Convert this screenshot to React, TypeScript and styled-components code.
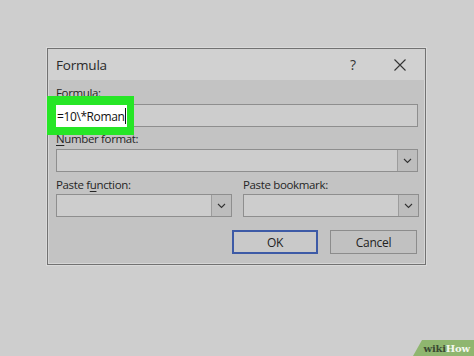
import React from 'react';
import styled, { createGlobalStyle } from 'styled-components';

const GlobalStyle = createGlobalStyle`
  html, body {
    margin: 0;
    padding: 0;
    background: #cdcdcd;
  }
  #root {
    width: 474px;
    height: 356px;
  }
`;

const Page = styled.div`
  position: relative;
  width: 474px;
  height: 356px;
  box-sizing: border-box;
  padding: 48px 0 0 47px;
  background: #cecece;
  overflow: hidden;
  font-family: 'Open Sans', 'Noto Sans', sans-serif;
  color: #222;
`;

const Dialog = styled.div`
  width: 379px;
  height: 217px;
  box-sizing: border-box;
  border: 1px solid #727272;
  box-shadow: 0 0 0 1px #dadada, inset 0 0 0 1px #d6d6d6;
  display: flex;
  flex-direction: column;
  background: #c3c3c3;
`;

const TitleBar = styled.div`
  height: 31px;
  flex: none;
  display: flex;
  align-items: center;
  padding: 0 10px 0 8px;
  background: #d1d1d1;
`;

const Title = styled.div`
  flex: 1;
  font-size: 13.5px;
  color: #2a2a2a;
  letter-spacing: -0.2px;
`;

const TitleButton = styled.div<{ $width: number; $gap?: number }>`
  width: ${p => p.$width}px;
  margin-left: ${p => p.$gap ?? 0}px;
  display: flex;
  justify-content: center;
  align-items: center;
  font-size: 14px;
  color: #333;
`;

const Body = styled.div`
  flex: 1;
  display: flex;
  flex-direction: column;
  padding: 5px 7px 0 8px;
`;

const Label = styled.div<{ $top?: number }>`
  font-size: 11.5px;
  letter-spacing: -0.35px;
  line-height: 16px;
  height: 16px;
  margin-top: ${p => p.$top ?? 0}px;
  color: #262626;
  white-space: nowrap;
`;

const Mnemonic = styled.span`
  text-decoration: underline;
  text-underline-offset: 2px;
`;

const Field = styled.div<{ $height: number; $top?: number }>`
  position: relative;
  height: ${p => p.$height}px;
  margin-top: ${p => p.$top ?? 0}px;
  box-sizing: border-box;
  border: 1px solid #8e8e8e;
  background: #cdcdcd;
  display: flex;
  align-items: stretch;
`;

const FieldText = styled.div`
  flex: 1;
`;

const ArrowButton = styled.div`
  width: 19px;
  flex: none;
  display: flex;
  align-items: center;
  justify-content: center;
  background: #bdbdbd;
  border-left: 1px solid #9c9c9c;
`;

const Highlight = styled.div`
  position: absolute;
  left: -10px;
  top: -9px;
  box-sizing: border-box;
  border: 9px solid #26e626;
  border-right-width: 7px;
  border-bottom-width: 8px;
  background: #fff;
  width: 87px;
  height: 39px;
  display: flex;
  align-items: center;
  padding-left: 1px;
  font-size: 12px;
  letter-spacing: -0.4px;
  color: #111;
  white-space: nowrap;
`;

const Caret = styled.span`
  display: inline-block;
  width: 1px;
  height: 16px;
  background: #111;
  margin-left: 1px;
`;

const Columns = styled.div`
  display: grid;
  grid-template-columns: 176px 176px;
  column-gap: 11px;
`;

const Column = styled.div`
  display: flex;
  flex-direction: column;
`;

const Buttons = styled.div`
  display: flex;
  justify-content: flex-end;
  gap: 12px;
  margin-top: 13px;
  padding-right: 1px;
`;

const Button = styled.div<{ $primary?: boolean; $width: number }>`
  width: ${p => p.$width}px;
  height: 24px;
  box-sizing: border-box;
  border: ${p => (p.$primary ? '2px solid #3d5aa6' : '1px solid #8c8c8c')};
  background: ${p => (p.$primary ? '#c9c9c9' : '#c1c1c1')};
  display: flex;
  align-items: center;
  justify-content: center;
  font-size: 12px;
  letter-spacing: -0.3px;
  color: #222;
`;

const Badge = styled.div`
  position: absolute;
  right: 0;
  bottom: 0;
  width: 61px;
  height: 16px;
  background: #8fb66f;
  clip-path: polygon(9px 0, 100% 0, 100% 100%, 0 100%);
  display: flex;
  align-items: center;
  justify-content: flex-end;
  padding-right: 4px;
  box-sizing: border-box;
  font-family: 'DejaVu Serif', 'Liberation Serif', serif;
  font-weight: bold;
  font-size: 10px;
  letter-spacing: -0.2px;
`;

const Wiki = styled.span`
  color: #3b4a33;
`;

const How = styled.span`
  color: #f4f8ef;
`;

const Chevron = () => (
  <svg width="9" height="6" viewBox="0 0 9 6">
    <path d="M1 1 L4.5 4.5 L8 1" fill="none" stroke="#333" strokeWidth="1.1" />
  </svg>
);

const CloseIcon = () => (
  <svg width="12" height="12" viewBox="0 0 12 12">
    <path d="M0.5 0.5 L11.5 11.5 M11.5 0.5 L0.5 11.5" stroke="#333" strokeWidth="1.1" />
  </svg>
);

const Dropdown: React.FC<{ top?: number }> = ({ top }) => (
  <Field $height={23} $top={top}>
    <FieldText />
    <ArrowButton>
      <Chevron />
    </ArrowButton>
  </Field>
);

export default function App() {
  return (
    <>
      <GlobalStyle />
      <Page>
        <Dialog>
          <TitleBar>
            <Title>Formula</Title>
            <TitleButton $width={20}>?</TitleButton>
            <TitleButton $width={30} $gap={22}>
              <CloseIcon />
            </TitleButton>
          </TitleBar>
          <Body>
            <Label>Formula:</Label>
            <Field $height={23} $top={3}>
              <FieldText />
              <Highlight>
                =10\*Roman
                <Caret />
              </Highlight>
            </Field>
            <Label $top={4}>
              <Mnemonic>N</Mnemonic>umber format:
            </Label>
            <Dropdown top={2} />
            <Columns>
              <Column>
                <Label $top={5}>
                  Paste f<Mnemonic>u</Mnemonic>nction:
                </Label>
                <Dropdown top={1} />
              </Column>
              <Column>
                <Label $top={5}>Paste bookmark:</Label>
                <Dropdown top={1} />
              </Column>
            </Columns>
            <Buttons>
              <Button $primary $width={86}>OK</Button>
              <Button $width={87}>Cancel</Button>
            </Buttons>
          </Body>
        </Dialog>
        <Badge>
          <Wiki>wiki</Wiki>
          <How>How</How>
        </Badge>
      </Page>
    </>
  );
}
